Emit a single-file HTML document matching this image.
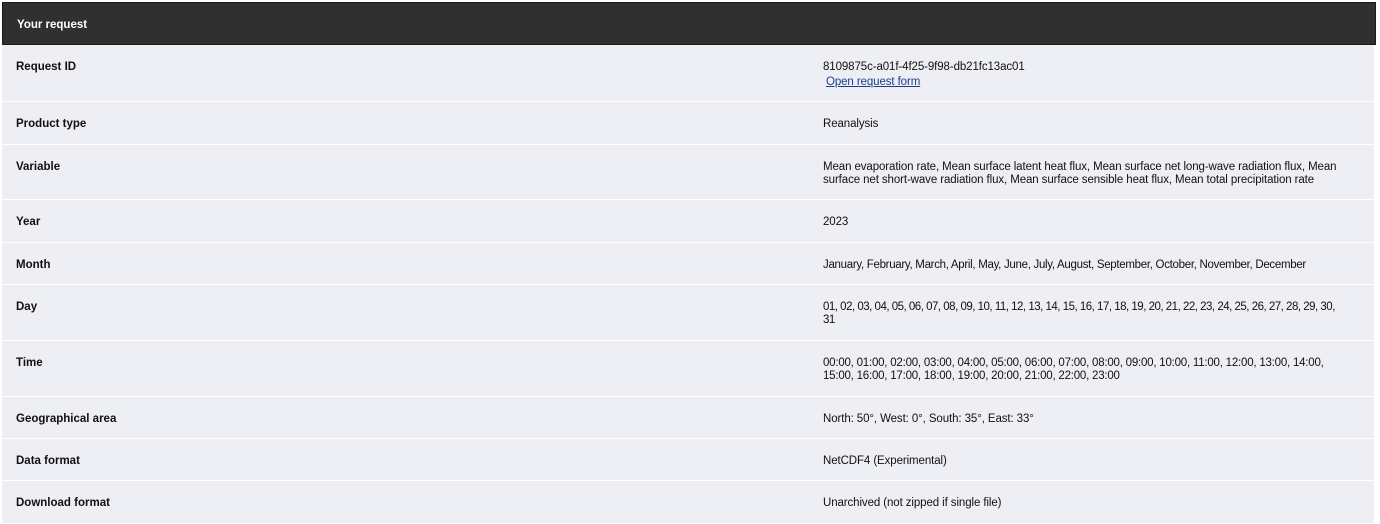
<!DOCTYPE html>
<html><head><meta charset="utf-8"><style>
body{margin:0;width:1380px;height:524px;background:#fff;font-family:"Liberation Sans",sans-serif;font-size:11.5px;color:#111;position:relative;overflow:hidden}
.h{position:absolute;left:2px;top:2px;width:1372px;height:41px;background:#303030;border:1px solid #1a1a1a;color:#fff;font-weight:bold}
.h span{position:absolute;left:14px;top:16px;line-height:13px}
.r{position:absolute;left:2px;width:1372px;background:#eeeff4}
.l{position:absolute;left:14px;top:16px;font-weight:bold;line-height:13px;white-space:nowrap}
.v{position:absolute;left:821px;top:16px;line-height:13px;white-space:nowrap;letter-spacing:-0.1px}
a{color:#1a3d8f;text-decoration:underline}
</style></head><body>
<div class="h"><span>Your request</span></div>
<div class="r" style="top:45px;height:56px"><div class="l">Request ID</div><div class="v">8109875c-a01f-4f25-9f98-db21fc13ac01<br><a style="margin-left:3px;line-height:16px">Open request form</a></div></div>
<div class="r" style="top:102px;height:42px"><div class="l">Product type</div><div class="v">Reanalysis</div></div>
<div class="r" style="top:145px;height:54px"><div class="l">Variable</div><div class="v">Mean evaporation rate, Mean surface latent heat flux, Mean surface net long-wave radiation flux, Mean<br>surface net short-wave radiation flux, Mean surface sensible heat flux, Mean total precipitation rate</div></div>
<div class="r" style="top:200px;height:42px"><div class="l">Year</div><div class="v">2023</div></div>
<div class="r" style="top:243px;height:41px"><div class="l">Month</div><div class="v" style="letter-spacing:-0.3px">January, February, March, April, May, June, July, August, September, October, November, December</div></div>
<div class="r" style="top:285px;height:55px"><div class="l">Day</div><div class="v" style="letter-spacing:-0.5px">01, 02, 03, 04, 05, 06, 07, 08, 09, 10, 11, 12, 13, 14, 15, 16, 17, 18, 19, 20, 21, 22, 23, 24, 25, 26, 27, 28, 29, 30,<br>31</div></div>
<div class="r" style="top:341px;height:55px"><div class="l">Time</div><div class="v" style="letter-spacing:-0.22px">00:00, 01:00, 02:00, 03:00, 04:00, 05:00, 06:00, 07:00, 08:00, 09:00, 10:00, 11:00, 12:00, 13:00, 14:00,<br>15:00, 16:00, 17:00, 18:00, 19:00, 20:00, 21:00, 22:00, 23:00</div></div>
<div class="r" style="top:397px;height:41px"><div class="l">Geographical area</div><div class="v">North: 50°, West: 0°, South: 35°, East: 33°</div></div>
<div class="r" style="top:439px;height:41px"><div class="l">Data format</div><div class="v">NetCDF4 (Experimental)</div></div>
<div class="r" style="top:481px;height:42px"><div class="l">Download format</div><div class="v">Unarchived (not zipped if single file)</div></div>
</body></html>
